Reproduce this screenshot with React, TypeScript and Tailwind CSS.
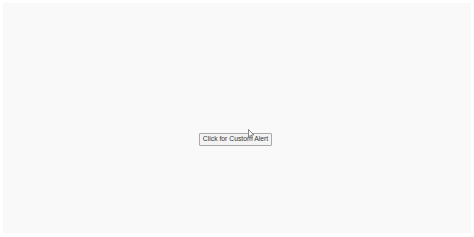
export default function App() {
  return (
    <div className="w-[474px] h-[237px] bg-white p-[3px] pb-[4px]" style={{ fontFamily: '"Liberation Sans", Arial, sans-serif' }}>
      <div className="relative h-full bg-[#f9f9f9] flex justify-center items-start pt-[130px] pr-[3px]">
        <button className="h-[13px] px-[3px] border border-[#a9a9a9] rounded-[1px] bg-[#f3f3f3] text-[#333] text-[6.8px] leading-none whitespace-nowrap">
          Click for Custom Alert
        </button>
        <svg className="absolute left-[245px] top-[126px]" width="7" height="10" viewBox="0 0 7 10">
          <path d="M0.5 0.5 L0.5 8 L2.3 6.4 L3.5 9.3 L4.6 8.8 L3.4 6 L5.8 6 Z" fill="#fff" stroke="#555" strokeWidth="0.7" strokeLinejoin="round" />
        </svg>
      </div>
    </div>
  );
}
